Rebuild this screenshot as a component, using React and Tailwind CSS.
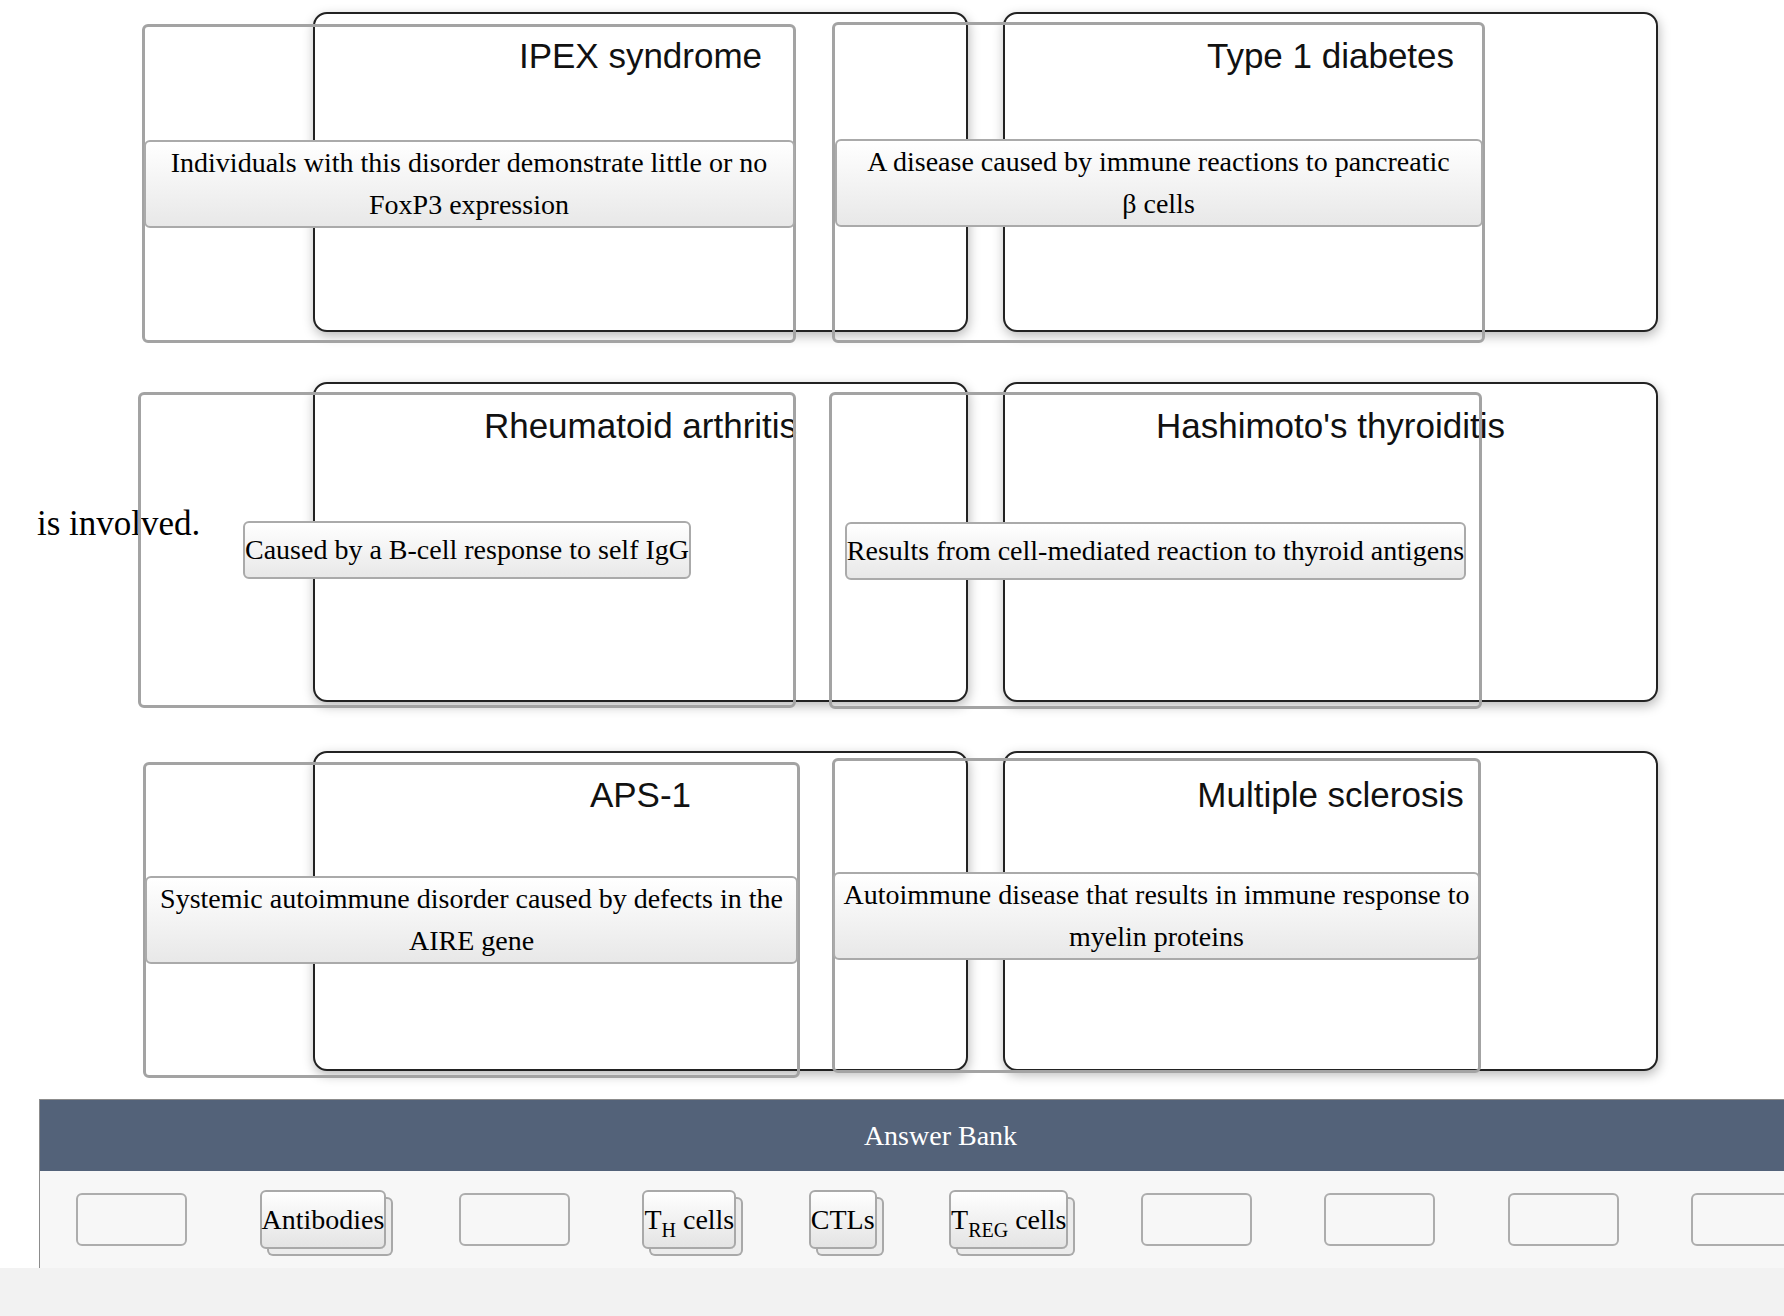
import React from "react";

const serif = "font-['Liberation_Serif','Times_New_Roman',serif]";
const sans = "font-['Liberation_Sans',Arial,sans-serif]";

// Each row holds two disease cards; every card carries a drop frame with the
// statement that was placed on it.
const rows = [
  {
    space: "mt-[12px]",
    side: null,
    cards: [
      {
        title: "IPEX syndrome",
        text: "Individuals with this disorder demonstrate little or no FoxP3 expression",
        frame: "left-[-173px] top-[10px] w-[654px] h-[319px]",
        chip: "max-w-[651px]",
      },
      {
        title: "Type 1 diabetes",
        text: "A disease caused by immune reactions to pancreatic β\u00a0cells",
        frame: "left-[-173px] top-[8px] w-[653px] h-[321px]",
        chip: "max-w-[648px]",
      },
    ],
  },
  {
    space: "mt-[50px]",
    side: "is involved.",
    cards: [
      {
        title: "Rheumatoid arthritis",
        text: "Caused by a B-cell response to self IgG",
        frame: "left-[-177px] top-[8px] w-[658px] h-[316px]",
        chip: "max-w-[651px]",
      },
      {
        title: "Hashimoto's thyroiditis",
        text: "Results from cell-mediated reaction to thyroid antigens",
        frame: "left-[-176px] top-[8px] w-[653px] h-[317px]",
        chip: "max-w-[648px]",
      },
    ],
  },
  {
    space: "mt-[49px]",
    side: null,
    cards: [
      {
        title: "APS-1",
        text: "Systemic autoimmune disorder caused by defects in the AIRE gene",
        frame: "left-[-172px] top-[9px] w-[657px] h-[316px]",
        chip: "max-w-[653px]",
      },
      {
        title: "Multiple sclerosis",
        text: "Autoimmune disease that results in immune response to myelin proteins",
        frame: "left-[-173px] top-[5px] w-[649px] h-[315px]",
        chip: "max-w-[647px]",
      },
    ],
  },
];

function Card({ title, text, frame, chip }) {
  return (
    <div className="relative w-[655px] h-[320px] shrink-0 rounded-[14px] border-2 border-[#222] bg-white shadow-[1px_4px_12px_rgba(0,0,0,0.28)]">
      <div className={`${sans} pt-[22px] text-center text-[35px] leading-[40px] text-[#111]`}>
        {title}
      </div>
      <div
        className={`absolute z-10 ${frame} rounded-[6px] border-[3px] border-[#a3a3a3] flex items-center justify-center`}
      >
        <div
          className={`${chip} ${serif} shrink-0 min-h-[58px] flex items-center justify-center text-center text-[28px] leading-[42px] text-black rounded-[6px] border-2 border-[#aaaaaa] bg-linear-to-b from-white to-[#e8e8e8]`}
        >
          {text}
        </div>
      </div>
    </div>
  );
}

function Slot() {
  return <div className="w-[111px] h-[53px] shrink-0 rounded-[6px] border-2 border-[#adadad]" />;
}

function Token({ children }) {
  return (
    <div
      className={`${serif} h-[59px] shrink-0 flex items-center whitespace-nowrap rounded-[6px] border-2 border-[#a9a9a9] bg-linear-to-b from-white to-[#e4e4e4] text-[28px] leading-none text-black shadow-[7px_7px_0_-2px_#ececec,7px_7px_0_0_#a9a9a9]`}
    >
      <span>{children}</span>
    </div>
  );
}

function Sub({ children }) {
  return <span className="relative top-[8px] text-[20px]">{children}</span>;
}

export default function App() {
  return (
    <div className="w-[1784px] h-[1316px] overflow-hidden bg-white flex flex-col">
      {rows.map((row, i) => (
        <div key={i} className={`${row.space} flex`}>
          <div className="w-[313px] shrink-0">
            {row.side && (
              <div className={`${serif} pl-[37px] pt-[124px] text-[35px] leading-[35px] text-black whitespace-nowrap`}>
                {row.side}
              </div>
            )}
          </div>
          <div className="flex gap-[35px]">
            {row.cards.map((c) => (
              <Card key={c.title} {...c} />
            ))}
          </div>
        </div>
      ))}

      <div className="mt-[28px] ml-[39px] w-[1802px] shrink-0 border-l border-t border-[#8c8c8c]">
        <div className={`${serif} h-[71px] bg-[#536279] flex items-center justify-center text-[28px] text-white`}>
          Answer Bank
        </div>
        <div className="h-[97px] bg-[#f7f7f7] flex items-center gap-[72.5px] pl-[36px]">
          <Slot />
          <Token>Antibodies</Token>
          <Slot />
          <Token>
            T<Sub>H</Sub> cells
          </Token>
          <Token>CTLs</Token>
          <Token>
            T<Sub>REG</Sub> cells
          </Token>
          <Slot />
          <Slot />
          <Slot />
          <Slot />
        </div>
      </div>
      <div className="flex-1 bg-[#f2f2f2]" />
    </div>
  );
}
